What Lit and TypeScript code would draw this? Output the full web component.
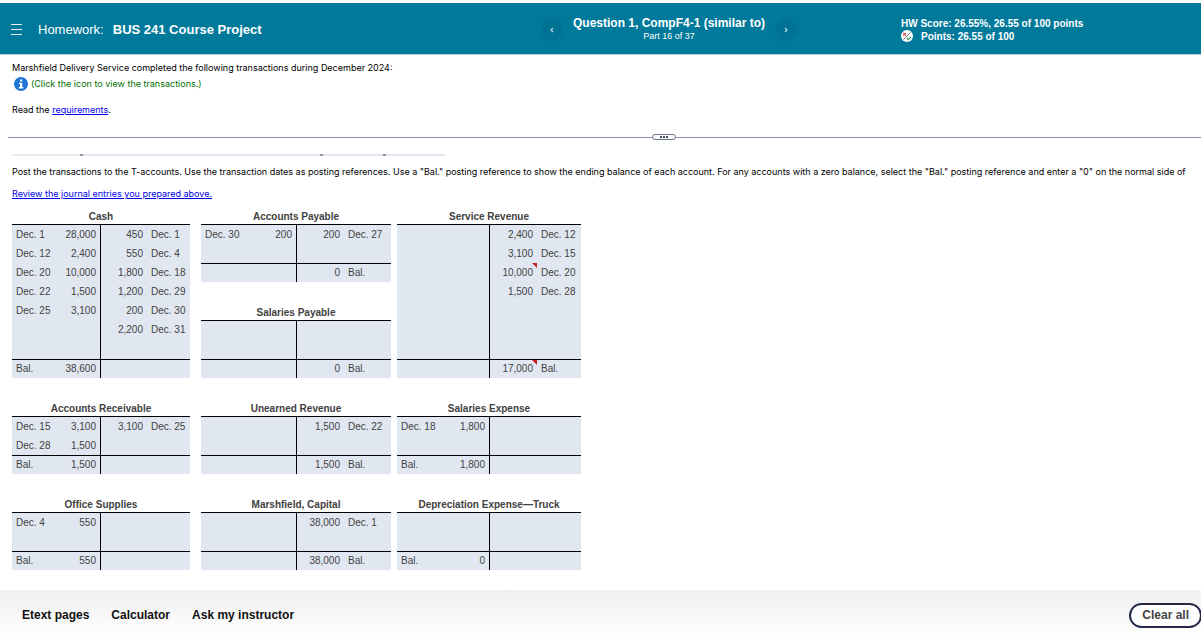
import { LitElement, html, css, svg, nothing } from "lit";
import { customElement, property } from "lit/decorators.js";

interface Entry {
  date: string;
  amount: string;
  flagged?: boolean;
}

interface Account {
  name: string;
  rows: number;
  debits: Entry[];
  credits: Entry[];
  debitBalance?: Entry;
  creditBalance?: Entry;
}

const entry = (date: string, amount: string, flagged = false): Entry => ({ date, amount, flagged });
const bal = (amount: string, flagged = false): Entry => entry("Bal.", amount, flagged);

const COLUMNS: Account[][] = [
  [
    {
      name: "Cash",
      rows: 7,
      debits: [
        entry("Dec. 1", "28,000"),
        entry("Dec. 12", "2,400"),
        entry("Dec. 20", "10,000"),
        entry("Dec. 22", "1,500"),
        entry("Dec. 25", "3,100"),
      ],
      credits: [
        entry("Dec. 1", "450"),
        entry("Dec. 4", "550"),
        entry("Dec. 18", "1,800"),
        entry("Dec. 29", "1,200"),
        entry("Dec. 30", "200"),
        entry("Dec. 31", "2,200"),
      ],
      debitBalance: bal("38,600"),
    },
    {
      name: "Accounts Receivable",
      rows: 2,
      debits: [entry("Dec. 15", "3,100"), entry("Dec. 28", "1,500")],
      credits: [entry("Dec. 25", "3,100")],
      debitBalance: bal("1,500"),
    },
    { name: "Office Supplies", rows: 2, debits: [entry("Dec. 4", "550")], credits: [], debitBalance: bal("550") },
  ],
  [
    {
      name: "Accounts Payable",
      rows: 2,
      debits: [entry("Dec. 30", "200")],
      credits: [entry("Dec. 27", "200")],
      creditBalance: bal("0"),
    },
    { name: "Salaries Payable", rows: 2, debits: [], credits: [], creditBalance: bal("0") },
    { name: "Unearned Revenue", rows: 2, debits: [], credits: [entry("Dec. 22", "1,500")], creditBalance: bal("1,500") },
    { name: "Marshfield, Capital", rows: 2, debits: [], credits: [entry("Dec. 1", "38,000")], creditBalance: bal("38,000") },
  ],
  [
    {
      name: "Service Revenue",
      rows: 7,
      debits: [],
      credits: [
        entry("Dec. 12", "2,400"),
        entry("Dec. 15", "3,100"),
        entry("Dec. 20", "10,000", true),
        entry("Dec. 28", "1,500"),
      ],
      creditBalance: bal("17,000", true),
    },
    { name: "Salaries Expense", rows: 2, debits: [entry("Dec. 18", "1,800")], credits: [], debitBalance: bal("1,800") },
    { name: "Depreciation Expense—Truck", rows: 2, debits: [], credits: [], debitBalance: bal("0") },
  ],
];

@customElement("t-account")
export class TAccount extends LitElement {
  @property({ attribute: false }) account!: Account;

  static styles = css`
    :host {
      display: block;
    }
    .ledger {
      width: 100%;
      border-collapse: separate;
      border-spacing: 0;
      table-layout: fixed;
      color: #424242;
      font-size: 10px;
      line-height: 18px;
    }
    .name {
      padding: 4px 0 0;
      line-height: 15px;
      font-weight: bold;
      text-align: center;
      white-space: nowrap;
    }
    .debit-date-col {
      width: 44px;
    }
    .credit-col {
      width: var(--credit-width, 48px);
    }
    .credit-date-col {
      width: var(--credit-date-width, 44px);
    }
    td {
      box-sizing: border-box;
      height: 19px;
      padding: 0 4px;
      background: #e1e7f1;
      white-space: nowrap;
    }
    .first td,
    .balance td {
      border-top: 1px solid #000;
    }
    .first td,
    .last td {
      height: 20px;
    }
    .short .last td {
      height: 19px;
    }
    .amount {
      position: relative;
      text-align: right;
    }
    .credit {
      border-left: 1px solid #000;
    }
    .flag {
      position: absolute;
      top: 0;
      right: 0;
      width: 5px;
      height: 5px;
      background: #c8202a;
      clip-path: polygon(0 0, 100% 0, 100% 100%);
    }
  `;

  private line(kind: string, debit?: Entry, credit?: Entry) {
    const flag = html`<span class="flag"></span>`;
    return html`<tr class=${kind}>
      <td>${debit?.date}</td>
      <td class="amount">${debit?.amount}${debit?.flagged ? flag : nothing}</td>
      <td class="amount credit">${credit?.amount}${credit?.flagged ? flag : nothing}</td>
      <td>${credit?.date}</td>
    </tr>`;
  }

  render() {
    const a = this.account;
    const rows = Array.from({ length: a.rows }, (_, i) =>
      this.line(i === 0 ? "first" : i === a.rows - 1 ? "last" : "middle", a.debits[i], a.credits[i]),
    );
    return html`<table class="ledger ${a.rows === 2 ? "short" : ""}">
      <colgroup>
        <col class="debit-date-col" />
        <col />
        <col class="credit-col" />
        <col class="credit-date-col" />
      </colgroup>
      <thead>
        <tr><th class="name" colspan="4" scope="colgroup">${a.name}</th></tr>
      </thead>
      <tbody>
        ${rows}${this.line("balance", a.debitBalance, a.creditBalance)}
      </tbody>
    </table>`;
  }
}

const chevron = (d: string) => svg`<svg width="8" height="8" viewBox="0 0 8 8" aria-hidden="true">
  <path d=${d} fill="none" stroke="#b5dbe6" stroke-width="1.2" />
</svg>`;

@customElement("app-root")
export class AppRoot extends LitElement {
  static styles = css`
    :host {
      display: flex;
      flex-direction: column;
      min-height: 100vh;
      overflow: hidden;
      background: #fff;
      color: #000;
      font-family: "Liberation Sans", Arial, sans-serif;
      font-size: 10px;
    }
    button {
      padding: 0;
      border: 0;
      background: none;
      color: inherit;
      font: inherit;
    }
    p {
      margin: 0;
      font-family: Inter, "Liberation Sans", sans-serif;
      font-size: 9px;
      line-height: 16px;
      white-space: nowrap;
    }
    a {
      color: #0000ee;
    }
    .bar {
      display: grid;
      grid-template-columns: 541px 256px 1fr;
      align-items: center;
      box-sizing: border-box;
      height: 52px;
      margin-top: 3px;
      padding-top: 2px;
      border-bottom: 1px solid #b9cfda;
      background: #00799b;
      color: #fff;
    }
    .course {
      display: flex;
      align-items: center;
      padding-left: 11px;
      font-size: 13px;
    }
    .menu {
      display: flex;
      margin-right: 16px;
    }
    .course-name {
      margin: 0 0 0 9px;
      font-size: 13px;
    }
    .question {
      display: flex;
      align-items: center;
      justify-content: space-between;
      text-align: center;
      white-space: nowrap;
    }
    .question-name {
      margin: 0;
      font-size: 12px;
      line-height: 14px;
    }
    .part {
      font-size: 9px;
      line-height: 13px;
    }
    .step {
      display: flex;
      align-items: center;
      justify-content: center;
      width: 22px;
      height: 22px;
      border-radius: 50%;
      background: #007293;
    }
    .scores {
      padding-left: 104px;
      font-size: 10px;
      font-weight: bold;
      line-height: 13px;
      white-space: nowrap;
    }
    .points {
      display: flex;
      align-items: center;
      gap: 8px;
    }
    .intro {
      padding: 5px 12px 0;
    }
    .hint {
      display: flex;
      gap: 3px;
      align-items: center;
      padding-left: 2px;
      color: #007000;
      line-height: 14px;
    }
    .read {
      margin-top: 11px;
    }
    .splitter {
      display: grid;
      grid-template-columns: 644px auto 1fr;
      align-items: center;
      margin: 16px 0 0 8px;
      height: 7px;
    }
    .rule {
      height: 1px;
      background: #8a90a4;
    }
    .grip {
      display: flex;
      align-items: center;
      align-self: start;
      justify-content: center;
      gap: 1px;
      box-sizing: border-box;
      width: 24px;
      height: 6px;
      border: 1px solid #6d7791;
      border-radius: 3px;
    }
    .dot {
      width: 2px;
      height: 2px;
      background: #444a60;
    }
    .work {
      padding: 13px 0 20px 12px;
    }
    .strip {
      display: grid;
      grid-template-columns: 68px 237px 60px 59px;
      gap: 3px;
      width: max-content;
      height: 2px;
      background: #8d929c;
    }
    .strip-cell {
      background: #e1e7f1;
    }
    .strip-cell:first-child {
      background: #ebebea;
    }
    .task {
      margin-top: 8px;
    }
    .review {
      margin-top: 6px;
    }
    .accounts {
      display: flex;
      gap: 6px;
      margin-top: 3px;
    }
    .column {
      display: flex;
      flex-direction: column;
      flex: none;
      gap: 19px;
      width: 184px;
    }
    .column:first-child {
      --credit-width: 47px;
      --credit-date-width: 43px;
      width: 178px;
      margin-right: 5px;
    }
    .column:nth-child(2) {
      --credit-date-width: 47px;
      width: 190px;
    }
    .footer {
      display: flex;
      align-items: center;
      gap: 22px;
      box-sizing: border-box;
      height: 50px;
      margin-top: auto;
      padding-left: 22px;
      background: linear-gradient(#f0f0f0, #fff);
      font-size: 12px;
      font-weight: bold;
    }
    .tool {
      color: #111;
    }
    .clear {
      box-sizing: border-box;
      height: 25px;
      margin: 0 -1px 0 auto;
      padding: 0 11px;
      border: 2px solid #252a47;
      border-radius: 13px;
      background: #fff;
      color: #444;
    }
  `;

  render() {
    return html`
      <header class="bar">
        <div class="course">
          <button class="menu" aria-label="Menu">
            <svg width="11" height="11" viewBox="0 0 11 11" aria-hidden="true">
              <path d="M0 .5h11M0 5.5h11M0 10.5h11" stroke="#e4f1f5" />
            </svg>
          </button>
          <span>Homework:</span>
          <h1 class="course-name">BUS 241 Course Project</h1>
        </div>
        <nav class="question">
          <button class="step" aria-label="Previous question">${chevron("M5 2L3 4L5 6")}</button>
          <div>
            <h2 class="question-name">Question 1, CompF4-1 (similar to)</h2>
            <div class="part">Part 16 of 37</div>
          </div>
          <button class="step" aria-label="Next question">${chevron("M3 2L5 4L3 6")}</button>
        </nav>
        <div class="scores">
          <div>HW Score: 26.55%, 26.55 of 100 points</div>
          <div class="points">
            <svg width="12" height="12" viewBox="0 0 12 12" aria-hidden="true">
              <circle cx="6" cy="6" r="6" fill="#fff" />
              <path d="M2.5 9.5L9.5 2.5" stroke="#777" />
              <path d="M2.2 3l2.6 2.6M4.8 3L2.2 5.6" stroke="#d8434b" stroke-width="1.2" />
              <path d="M6 8.3l1.3 1.4L9.8 7" fill="none" stroke="#3c9a55" stroke-width="1.2" />
            </svg>
            <span>Points: 26.55 of 100</span>
          </div>
        </div>
      </header>

      <section class="intro">
        <p>Marshfield Delivery Service completed the following transactions during December 2024:</p>
        <p class="hint">
          <svg width="14" height="15" viewBox="0 -1 14 15" aria-hidden="true">
            <circle cx="7" cy="7" r="7" fill="#1f74d8" />
            <path d="M6 2.5h2.2v2H6zM5 5.7h3.2v4.4H9.3v1.4H4.8v-1.4H6V7.1H5z" fill="#fff" />
          </svg>
          <span>(Click the icon to view the transactions.)</span>
        </p>
        <p class="read">Read the <a href="#requirements">requirements</a>.</p>
      </section>

      <div class="splitter">
        <span class="rule"></span>
        <button class="grip" aria-label="Resize panes">
          <span class="dot"></span><span class="dot"></span><span class="dot"></span>
        </button>
        <span class="rule"></span>
      </div>

      <main class="work">
        <div class="strip">
          <span class="strip-cell"></span><span class="strip-cell"></span><span class="strip-cell"></span
          ><span class="strip-cell"></span>
        </div>
        <p class="task">
          Post the transactions to the T-accounts. Use the transaction dates as posting references. Use a "Bal." posting
          reference to show the ending balance of each account. For any accounts with a zero balance, select the "Bal."
          posting reference and enter a "0" on the normal side of
        </p>
        <p class="review"><a href="#journal">Review the journal entries you prepared above.</a></p>
        <div class="accounts">
          ${COLUMNS.map(
            (column) => html`<div class="column">
              ${column.map((account) => html`<t-account .account=${account}></t-account>`)}
            </div>`,
          )}
        </div>
      </main>

      <footer class="footer">
        <button class="tool">Etext pages</button>
        <button class="tool">Calculator</button>
        <button class="tool">Ask my instructor</button>
        <button class="clear">Clear all</button>
      </footer>
    `;
  }
}
